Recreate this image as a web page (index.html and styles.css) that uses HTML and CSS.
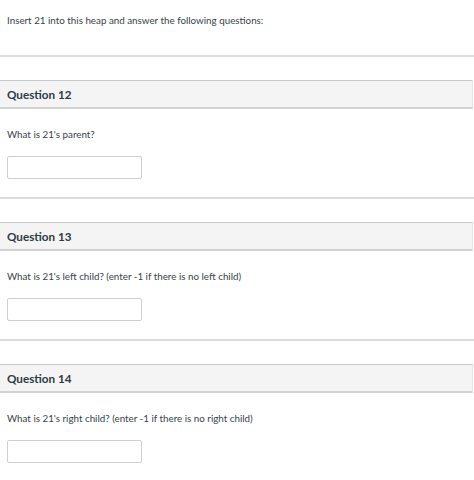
FILE: index.html
```html
<!DOCTYPE html>
<html>
<head>
<meta charset="utf-8">
<link rel="stylesheet" href="styles.css">
</head>
<body>
<div class="intro">
  <p class="text">Insert 21 into this heap and answer the following questions:</p>
</div>
<div class="question">
  <div class="q-header">Question 12</div>
  <div class="q-body">
    <p class="text">What is 21's parent?</p>
    <input class="answer" type="text">
  </div>
</div>
<div class="question">
  <div class="q-header">Question 13</div>
  <div class="q-body">
    <p class="text">What is 21's left child? (enter -1 if there is no left child)</p>
    <input class="answer" type="text">
  </div>
</div>
<div class="question last">
  <div class="q-header">Question 14</div>
  <div class="q-body">
    <p class="text">What is 21's right child? (enter -1 if there is no right child)</p>
    <input class="answer" type="text">
  </div>
</div>
</body>
</html>
```
FILE: styles.css
```css
* { box-sizing: border-box; }
body {
  margin: 0;
  background: #fff;
  font-family: Lato, "Liberation Sans", sans-serif;
  color: #2d3b45;
  width: 474px;
}
.text {
  margin: 0;
  font-size: 9.8px;
  line-height: 16px;
  color: #36434c;
}
.intro {
  padding: 12px 7px 0;
  height: 57px;
  border-bottom: 2px solid #dcdcdc;
}
.question {
  margin-top: 23px;
  border-bottom: 2px solid #dcdcdc;
}
.question.last {
  border-bottom: none;
}
.q-header {
  height: 29px;
  border-top: 1px solid #c9c9c9;
  border-bottom: 2px solid #d2d2d2;
  border-right: 1px solid #e6e6e6;
  margin-right: 1px;
  background: #f4f4f4;
  padding: 0 7px;
  display: flex;
  align-items: center;
  font-weight: 700;
  font-size: 11.7px;
  color: #2d3b45;
}
.q-body {
  padding: 17px 7px 18px;
  display: flex;
  flex-direction: column;
  align-items: flex-start;
  gap: 14px;
}
.answer {
  width: 135px;
  height: 23px;
  border: 1px solid #cfcfcf;
  border-radius: 2px;
  background: #fff;
  margin: 0;
  padding: 0 6px;
}
```
